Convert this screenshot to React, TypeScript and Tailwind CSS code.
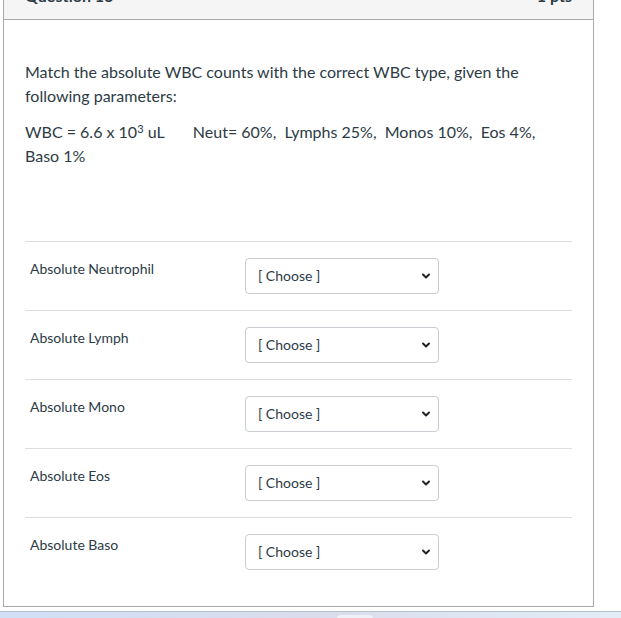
import { ChevronDown } from 'lucide-react';

const rows = ['Absolute Neutrophil', 'Absolute Lymph', 'Absolute Mono', 'Absolute Eos', 'Absolute Baso'];

function ChooseBox() {
  return (
    <div className="flex h-[36px] w-[194px] items-center justify-between rounded-[4px] border border-[#c7cdd1] bg-white pl-[12px] pr-[6px] text-[14px] text-[#2d3b45]">
      <span>[ Choose ]</span>
      <ChevronDown className="h-[12px] w-[12px] text-[#222]" strokeWidth={4} />
    </div>
  );
}

export default function App() {
  return (
    <div className="min-h-screen overflow-hidden bg-white font-['Lato','Liberation_Sans',sans-serif] text-[#2d3b45]">
      <div className="ml-[3px] -mt-[27px] w-[591px] border border-[#a9a9a9]">
        <div className="flex justify-between border-b border-[#a9a9a9] bg-[#f5f5f5] px-[21px] pt-[10px] pb-[11px] text-[16px] font-bold leading-6">
          <span>Question 16</span>
          <span>1 pts</span>
        </div>
        <div className="px-[21px] pt-[40px] pb-[20px] text-[16px] leading-6">
          <p>Match the absolute WBC counts with the correct WBC type, given the following parameters:</p>
          <p className="mt-[12px]">
            WBC = 6.6 x 10<sup className="text-[11px]">3</sup> uL&nbsp;&nbsp;&nbsp;&nbsp;&nbsp;&nbsp; Neut= 60%,&nbsp; Lymphs 25%,&nbsp; Monos 10%,&nbsp; Eos 4%, Baso 1%
          </p>
          <div className="mt-[73px]">
            {rows.map((r) => (
              <div key={r} className="flex items-start border-t border-[#dcdfe2] pt-[16px] pb-[16px]">
                <div className="w-[220px] px-[5px] text-[14px] leading-[21px]">{r}</div>
                <ChooseBox />
              </div>
            ))}
          </div>
        </div>
      </div>
      <div className="relative mt-[4px] h-[10px] border-t border-[#b9c1cc] bg-gradient-to-r from-[#cfe0f7] via-[#dadcec] to-[#e3edf8]">
        <div className="absolute left-[337px] top-[3px] h-[8px] w-[36px] rounded-t-[4px] bg-[#eef1f8]" />
      </div>
    </div>
  );
}
